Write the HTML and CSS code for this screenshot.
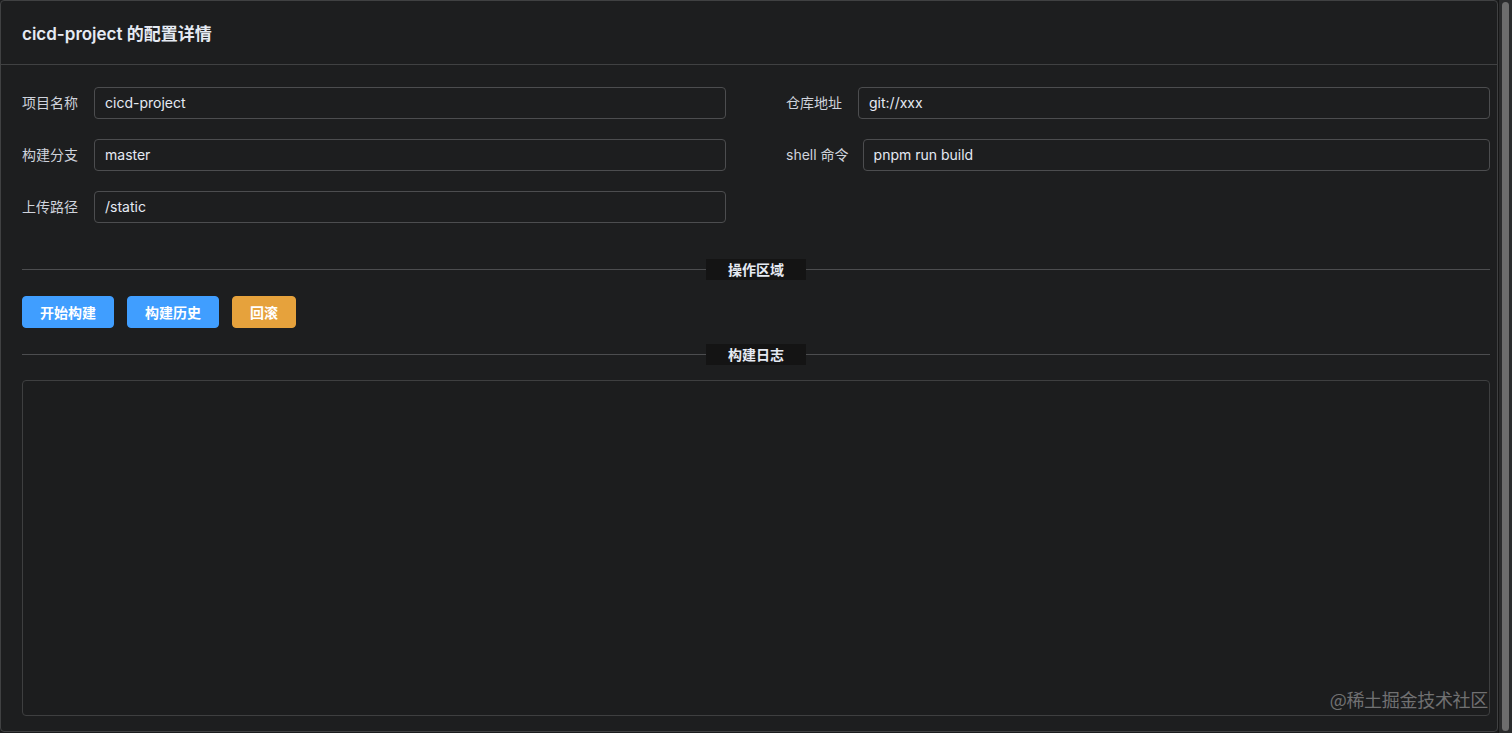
FILE: index.html
```html
<!DOCTYPE html>
<html lang="zh">
<head>
<meta charset="utf-8">
<link rel="stylesheet" href="styles.css">
</head>
<body>
<div class="page">
  <div class="card">
    <div class="card-header">cicd-project 的配置详情</div>
    <div class="card-body">
      <div class="form-grid">
        <div class="form-item"><span class="label">项目名称</span><div class="input">cicd-project</div></div>
        <div class="form-item"><span class="label">仓库地址</span><div class="input">git://xxx</div></div>
        <div class="form-item"><span class="label">构建分支</span><div class="input">master</div></div>
        <div class="form-item"><span class="label label-shell">shell 命令</span><div class="input">pnpm run build</div></div>
        <div class="form-item"><span class="label">上传路径</span><div class="input">/static</div></div>
      </div>
      <div class="divider divider-first"><span class="divider-text">操作区域</span></div>
      <div class="actions">
        <button class="btn btn-primary">开始构建</button>
        <button class="btn btn-primary">构建历史</button>
        <button class="btn btn-warning">回滚</button>
      </div>
      <div class="divider divider-second"><span class="divider-text">构建日志</span></div>
      <div class="log"></div>
    </div>
  </div>
  <div class="scrollbar"><div class="thumb"></div></div>
  <div class="watermark">@稀土掘金技术社区</div>
</div>
</body>
</html>
```
FILE: styles.css
```css
* { box-sizing: border-box; }
html, body {
  margin: 0;
  padding: 0;
  background: #1b1c1d;
  height: 733px;
  overflow: hidden;
}
body {
  font-family: Inter, "Noto Sans CJK SC", sans-serif;
  color: #cfd3dc;
  font-size: 14px;
}
.page {
  position: relative;
  display: flex;
  height: 733px;
}
.card {
  flex: 1;
  height: 732px;
  background: #1d1e1f;
  border: 1px solid #404142;
  border-radius: 4px;
  display: flex;
  flex-direction: column;
}
.card-header {
  height: 64px;
  flex: none;
  display: flex;
  align-items: center;
  padding: 0 21px;
  border-bottom: 1px solid #404142;
  font-size: 17px;
  font-weight: 600;
  color: #e5eaf3;
}
.card-body {
  padding: 22px 7px 0 21px;
}
.form-grid {
  display: grid;
  grid-template-columns: 1fr 1fr;
  column-gap: 60px;
  row-gap: 20px;
}
.form-item {
  display: flex;
  align-items: center;
  height: 32px;
}
.label {
  flex: none;
  padding-right: 16px;
  color: #cfd3dc;
  line-height: 32px;
}
.label-shell { padding-right: 14px; }
.input {
  flex: 1;
  height: 32px;
  border: 1px solid #4c4d4f;
  border-radius: 4px;
  padding: 0 10px;
  line-height: 30px;
  color: #e5eaf3;
  background: #1d1e1f;
}
.divider {
  position: relative;
  height: 1px;
  background: #4c4d4f;
  display: flex;
  justify-content: center;
  align-items: center;
}
.divider-first { margin: 46px 0 26px; }
.divider-second { margin: 26px 0 25px; }
.divider-text {
  background: #141414;
  height: 21px;
  line-height: 21px;
  padding: 0 22px;
  font-weight: 600;
  color: #e5eaf3;
  font-size: 14px;
}
.actions {
  display: flex;
  gap: 13px;
}
.btn {
  height: 32px;
  padding: 0 17px;
  border: 1px solid transparent;
  border-radius: 4px;
  font-family: inherit;
  font-size: 14px;
  font-weight: 600;
  color: #ffffff;
  cursor: pointer;
}
.btn-primary { background: #409eff; border-color: #409eff; }
.btn-warning { background: #e6a23c; border-color: #e6a23c; }
.log {
  height: 336px;
  border: 1px solid #3e3f40;
  border-radius: 4px;
  background: #1c1d1e;
}
.scrollbar {
  flex: none;
  width: 14px;
  background: #2a2b2c;
  border-left: 1px solid #161616;
  padding: 2px 3px;
}
.thumb {
  height: 100%;
  background: #6d6d6d;
  border-radius: 4px;
}
.watermark {
  position: absolute;
  right: 24px;
  top: 686px;
  font-size: 18px;
  color: rgba(255, 255, 255, 0.38);
  font-family: "Noto Sans CJK SC", sans-serif;
  letter-spacing: -0.3px;
}
```
